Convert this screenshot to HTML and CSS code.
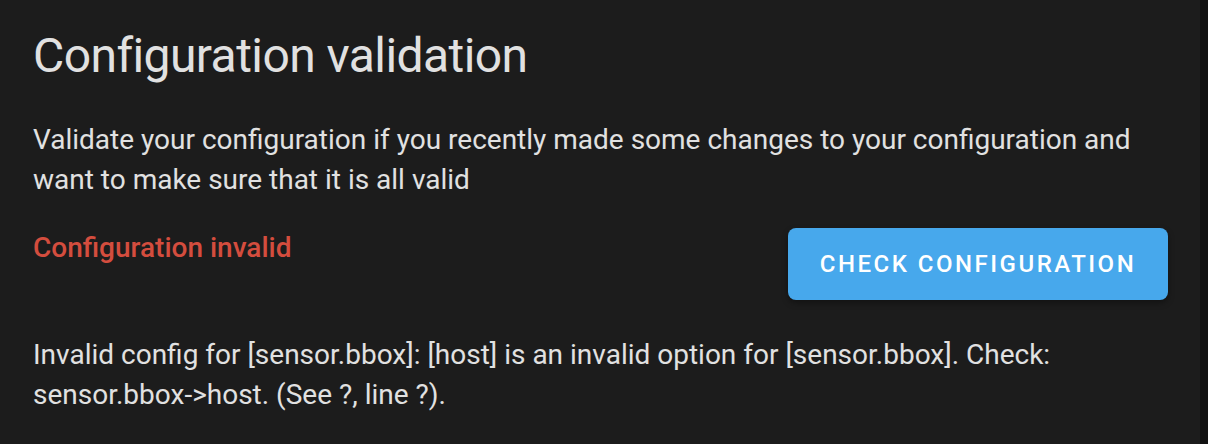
FILE: index.html
```html
<!DOCTYPE html>
<html>
<head>
<meta charset="utf-8">
<link rel="stylesheet" href="styles.css">
</head>
<body>
<div class="page">
  <div class="card">
    <h1 class="title">Configuration validation</h1>
    <p class="desc">Validate your configuration if you recently made some changes to your configuration and want to make sure that it is all valid</p>
    <div class="row">
      <div class="status">Configuration invalid</div>
      <button class="btn">CHECK CONFIGURATION</button>
    </div>
    <p class="error">Invalid config for [sensor.bbox]: [host] is an invalid option for [sensor.bbox]. Check: sensor.bbox-&gt;host. (See ?, line ?).</p>
  </div>
</div>
</body>
</html>
```
FILE: styles.css
```css
html, body {
  margin: 0;
  padding: 0;
  background: #111111;
  height: 100%;
}
.page {
  display: flex;
  height: 444px;
  overflow: hidden;
}
.card {
  width: 1200px;
  box-sizing: border-box;
  background: #1c1c1c;
  padding: 24px 32px 0 33px;
  font-family: Roboto, "Liberation Sans", sans-serif;
  color: #e1e1e1;
}
.title {
  margin: 0;
  font-size: 48px;
  line-height: 64px;
  font-weight: 400;
  letter-spacing: -0.576px;
  color: #e1e1e1;
}
.desc {
  margin: 32px 0 0 0;
  font-size: 28px;
  line-height: 40px;
  font-weight: 400;
}
.row {
  display: flex;
  justify-content: space-between;
  align-items: flex-start;
  margin-top: 28px;
}
.status {
  color: #d44d3e;
  font-size: 28px;
  line-height: 40px;
  font-weight: 500;
}
.btn {
  width: 380px;
  height: 72px;
  border: none;
  border-radius: 8px;
  background: #47a8ec;
  color: #ffffff;
  font-family: Roboto, "Liberation Sans", sans-serif;
  font-size: 24px;
  font-weight: 500;
  letter-spacing: 2.5px;
  box-shadow: 0 3px 6px rgba(0,0,0,0.35);
  padding: 0;
}
.error {
  margin: 35px 0 0 0;
  font-size: 28px;
  line-height: 40px;
}
```
